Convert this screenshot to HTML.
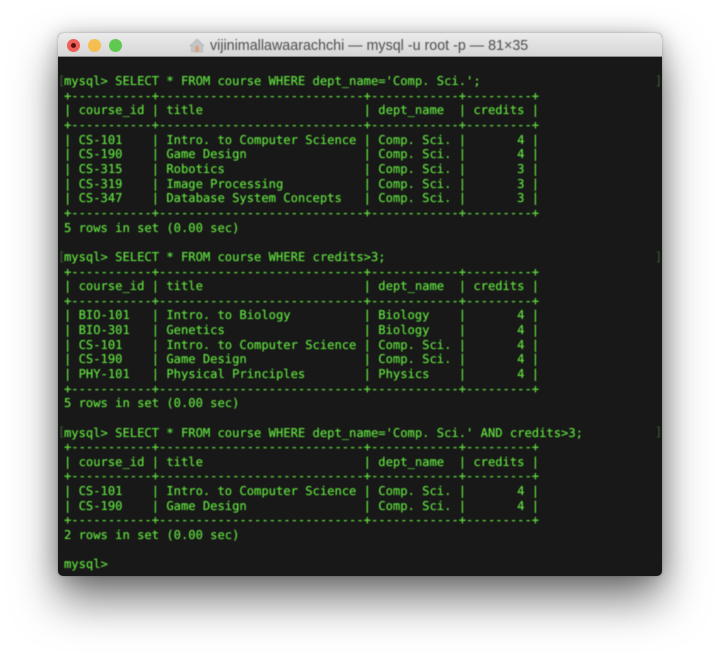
<!DOCTYPE html>
<html>
<head>
<meta charset="utf-8">
<style>
html,body{margin:0;padding:0;background:#fff;width:720px;height:660px;overflow:hidden}
#win{position:absolute;left:58px;top:33px;width:604px;height:543px;border-radius:5px;background:#181818;
box-shadow:0 24px 44px rgba(0,0,0,.52),0 2px 22px rgba(0,0,0,.24),0 0 2px rgba(0,0,0,.25);overflow:hidden}
#bar{position:absolute;left:0;top:0;width:604px;height:24px;background:linear-gradient(#ebebeb,#d6d6d6);border-bottom:1px solid #8e8e8e;box-sizing:border-box}
.dot{position:absolute;top:6px;width:13px;height:13px;border-radius:50%;filter:blur(.3px)}
#title{position:absolute;left:152px;top:4.5px;font:14.3px/17px "Liberation Sans",sans-serif;color:#4e4e4e;white-space:pre;filter:blur(.45px)}
#house{position:absolute;left:131px;top:5px;filter:blur(.4px)}
pre{position:absolute;margin:0;left:64px;top:74.2px;font:12.15px/14.636px "DejaVu Sans Mono",monospace;color:#5fdc3e;filter:blur(.45px);white-space:pre;text-rendering:geometricPrecision;text-shadow:0 0 .5px #5fdc3e}
.m{position:absolute;font:12px/14px "DejaVu Sans Mono",monospace;color:#3d6033;filter:blur(.4px)}
</style>
</head>
<body>
<div id="win">
<div id="bar">
<div class="dot" style="left:9px;background:#ee5f57"><div style="position:absolute;left:4px;top:4px;width:5px;height:5px;border-radius:50%;background:#5a1210"></div></div>
<div class="dot" style="left:30px;background:#f6bd4f"></div>
<div class="dot" style="left:51px;background:#5fc94f"></div>
<svg id="house" width="16" height="15" viewBox="0 0 16 15"><path d="M8 1 L15 8 L13.5 8 L13.5 14 L2.5 14 L2.5 8 L1 8 Z" fill="#c4c4c4" stroke="#acacac" stroke-width=".6"/><rect x="6.4" y="8" width="3.2" height="6" fill="#d9a077"/></svg>
<div id="title">vijinimallawaarachchi — mysql -u root -p — 81×35</div>
</div>
</div>
<div class="m" style="left:58px;top:74px">[</div>
<div class="m" style="left:655px;top:74px">]</div>
<div class="m" style="left:58px;top:250px">[</div>
<div class="m" style="left:655px;top:250px">]</div>
<div class="m" style="left:58px;top:425px">[</div>
<div class="m" style="left:655px;top:425px">]</div>
<pre>mysql&gt; SELECT * FROM course WHERE dept_name='Comp. Sci.';
+-----------+----------------------------+------------+---------+
| course_id | title                      | dept_name  | credits |
+-----------+----------------------------+------------+---------+
| CS-101    | Intro. to Computer Science | Comp. Sci. |       4 |
| CS-190    | Game Design                | Comp. Sci. |       4 |
| CS-315    | Robotics                   | Comp. Sci. |       3 |
| CS-319    | Image Processing           | Comp. Sci. |       3 |
| CS-347    | Database System Concepts   | Comp. Sci. |       3 |
+-----------+----------------------------+------------+---------+
5 rows in set (0.00 sec)

mysql&gt; SELECT * FROM course WHERE credits&gt;3;
+-----------+----------------------------+------------+---------+
| course_id | title                      | dept_name  | credits |
+-----------+----------------------------+------------+---------+
| BIO-101   | Intro. to Biology          | Biology    |       4 |
| BIO-301   | Genetics                   | Biology    |       4 |
| CS-101    | Intro. to Computer Science | Comp. Sci. |       4 |
| CS-190    | Game Design                | Comp. Sci. |       4 |
| PHY-101   | Physical Principles        | Physics    |       4 |
+-----------+----------------------------+------------+---------+
5 rows in set (0.00 sec)

mysql&gt; SELECT * FROM course WHERE dept_name='Comp. Sci.' AND credits&gt;3;
+-----------+----------------------------+------------+---------+
| course_id | title                      | dept_name  | credits |
+-----------+----------------------------+------------+---------+
| CS-101    | Intro. to Computer Science | Comp. Sci. |       4 |
| CS-190    | Game Design                | Comp. Sci. |       4 |
+-----------+----------------------------+------------+---------+
2 rows in set (0.00 sec)

mysql&gt;</pre>
</body>
</html>
